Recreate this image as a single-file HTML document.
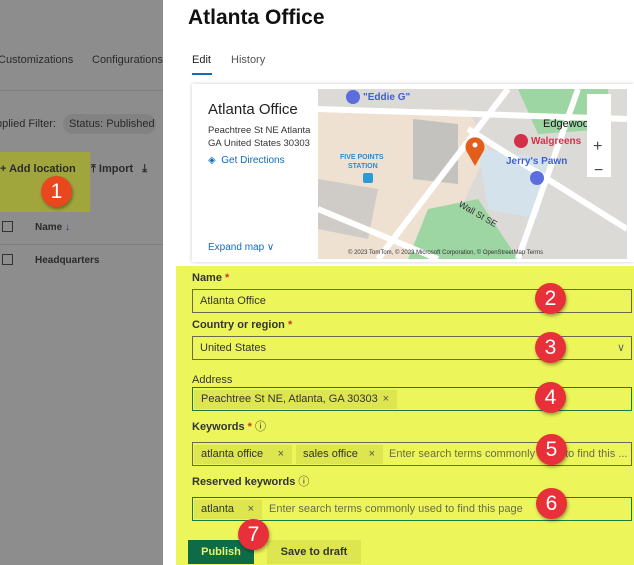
<!DOCTYPE html>
<html><head><style>
*{box-sizing:border-box;margin:0;padding:0}
body{width:634px;height:565px;overflow:hidden;position:relative;font-family:"Liberation Sans",sans-serif;background:#fff}
.abs{position:absolute;white-space:nowrap}
.ov{left:0;top:0;width:163px;height:565px;background:#8d8d8d;color:#2a2a2a;font-size:11px}
.lbl{position:absolute;left:192px;font-size:11px;font-weight:bold;color:#333}
.lbl .r{color:#c33}
.inp{position:absolute;left:192px;width:440px;height:24px;border:1px solid #6a6a50;font-size:11px;color:#333;padding-left:7px;line-height:22px;white-space:nowrap}
.tag{position:absolute;top:2px;height:19px;background:#dde64e;line-height:19px;padding-left:7px;font-size:11px;white-space:nowrap}
.tag i{position:absolute;right:8px;font-style:normal;color:#555}
.badge{position:absolute;width:31px;height:31px;border-radius:50%;background:#e8303a;color:#fff;font-size:21px;text-align:center;line-height:31px;box-shadow:1px 2px 3px rgba(0,0,0,.35)}
.ph{position:absolute;top:5px;color:#6b6b50;font-size:11px;line-height:13px}
</style></head><body>
<div class="abs ov">
 <div class="abs" style="left:-2px;top:54px">Customizations</div>
 <div class="abs" style="left:92px;top:54px">Configurations</div>
 <div class="abs" style="left:0;top:90px;width:163px;height:1px;background:#7f7f7f"></div>
 <div class="abs" style="left:-4px;top:118px">pplied Filter:</div>
 <div class="abs" style="left:63px;top:114px;width:93px;height:20px;border-radius:10px;background:#828282"></div>
 <div class="abs" style="left:69px;top:118px">Status: Published</div>
 <div class="abs" style="left:0;top:152px;width:90px;height:60px;background:#a0a63c"></div>
 <div class="abs" style="left:0;top:163px;font-weight:bold">+ Add location</div>
 <div class="abs" style="left:91px;top:163px;font-weight:bold">⤒ Import &nbsp;&nbsp;⤓</div>
 <div class="abs" style="left:2px;top:221px;width:11px;height:11px;border:1px solid #333"></div>
 <div class="abs" style="left:35px;top:222px;font-size:10px;font-weight:bold">Name <span style="color:#335">↓</span></div>
 <div class="abs" style="left:0;top:244px;width:163px;height:1px;background:#7f7f7f"></div>
 <div class="abs" style="left:2px;top:254px;width:11px;height:11px;border:1px solid #333"></div>
 <div class="abs" style="left:35px;top:255px;font-size:10px;font-weight:bold">Headquarters</div>
 <div class="badge" style="left:41px;top:176px;background:#e9471e">1</div>
</div>
<div class="abs" style="left:188px;top:6px;font-size:21px;font-weight:bold;color:#111">Atlanta Office</div>
<div class="abs" style="left:192px;top:54px;font-size:11px;color:#222">Edit</div>
<div class="abs" style="left:231px;top:54px;font-size:11px;color:#555">History</div>
<div class="abs" style="left:192px;top:73px;width:20px;height:2px;background:#0f6cbd"></div>
<div class="abs" style="left:192px;top:84px;width:442px;height:178px;box-shadow:0 0 4px rgba(0,0,0,.2);background:#fff"></div>
<div class="abs" style="left:208px;top:101px;font-size:15px;color:#222">Atlanta Office</div>
<div class="abs" style="left:208px;top:124px;font-size:9.5px;color:#333;line-height:13px">Peachtree St NE Atlanta<br>GA United States 30303</div>
<div class="abs" style="left:208px;top:155px;font-size:10px;color:#0f6cbd">◈ &nbsp;Get Directions</div>
<div class="abs" style="left:208px;top:242px;font-size:10px;color:#0f6cbd">Expand map ∨</div>
<svg class="abs" style="left:318px;top:89px" width="309" height="170" viewBox="0 0 309 170">
 <rect width="309" height="170" fill="#dcdad6"/>
 <polygon points="0,20 150,20 170,60 120,170 0,170" fill="#efe1d2"/>
 <polygon points="95,30 140,35 140,95 95,90" fill="#c4c2bf"/>
 <polygon points="0,90 60,100 50,150 0,140" fill="#cfccc8"/>
 <polygon points="200,0 290,0 290,40 220,45" fill="#9dd5a3"/>
 <polygon points="110,120 160,110 200,170 90,170" fill="#9dd5a3"/>
 <polygon points="160,60 230,70 220,130 170,120" fill="#d4e2ec"/>
 <g stroke="#fff" stroke-width="6" fill="none">
  <line x1="0" y1="20" x2="309" y2="30"/>
  <line x1="190" y1="0" x2="60" y2="170"/>
  <line x1="150" y1="40" x2="309" y2="140"/>
  <line x1="0" y1="120" x2="120" y2="170"/>
  <line x1="260" y1="0" x2="200" y2="170"/>
 </g>
 <path d="M157 77 L149 63 A9.5 9.5 0 1 1 165 63 Z" fill="#e35e1a"/>
 <circle cx="157" cy="56" r="2.5" fill="#fff"/>
 <circle cx="35" cy="8" r="7" fill="#5a6ee0"/>
 <text x="45" y="11" font-size="10" fill="#3c5ed8" font-weight="bold" font-family="Liberation Sans">"Eddie G"</text>
 <text x="22" y="70" font-size="7" fill="#2a8bd0" font-weight="bold" font-family="Liberation Sans">FIVE POINTS</text>
 <text x="30" y="79" font-size="7" fill="#2a8bd0" font-weight="bold" font-family="Liberation Sans">STATION</text>
 <rect x="45" y="84" width="10" height="10" rx="2" fill="#2a9bd8"/>
 <circle cx="203" cy="52" r="7" fill="#d5304a"/>
 <text x="213" y="55" font-size="10" fill="#d5304a" font-weight="bold" font-family="Liberation Sans">Walgreens</text>
 <text x="188" y="75" font-size="10" fill="#3c5ed8" font-weight="bold" font-family="Liberation Sans">Jerry's Pawn</text>
 <circle cx="219" cy="89" r="7" fill="#5a6ee0"/>
 <text x="140" y="117" font-size="9" fill="#333" font-family="Liberation Sans" transform="rotate(30 140 117)">Wall St SE</text>
 <text x="225" y="38" font-size="11" fill="#111" font-family="Liberation Sans">Edgewood</text>
 <rect x="269" y="5" width="24" height="83" fill="#fff"/>
 <text x="275" y="62" font-size="16" fill="#444" font-family="Liberation Sans">+</text>
 <text x="276" y="86" font-size="16" fill="#444" font-family="Liberation Sans">−</text>
 <text x="30" y="165" font-size="6" fill="#333" font-family="Liberation Sans">© 2023 TomTom, © 2023 Microsoft Corporation, © OpenStreetMap  Terms</text>
</svg>
<div class="abs" style="left:176px;top:266px;width:458px;height:299px;background:#ecf55a"></div>
<div class="lbl" style="top:272px">Name <span class="r">*</span></div>
<div class="inp" style="top:289px">Atlanta Office</div>
<div class="lbl" style="top:319px">Country or region <span class="r">*</span></div>
<div class="inp" style="top:336px">United States<span style="position:absolute;right:6px;color:#666">∨</span></div>
<div class="lbl" style="top:374px;font-weight:normal">Address</div>
<div class="inp" style="top:387px;border:1px solid #1a7a3e;padding:0"><div class="tag" style="left:1px;width:203px">Peachtree St NE, Atlanta, GA 30303<i>×</i></div></div>
<div class="lbl" style="top:418px">Keywords <span class="r">*</span> <span style="font-weight:normal">ⓘ</span></div>
<div class="inp" style="top:442px;padding:0"><div class="tag" style="left:1px;width:98px">atlanta office<i>×</i></div><div class="tag" style="left:103px;width:87px">sales office<i>×</i></div><div class="ph" style="left:196px">Enter search terms commonly used to find this ...</div></div>
<div class="lbl" style="top:473px">Reserved keywords <span style="font-weight:normal">ⓘ</span></div>
<div class="inp" style="top:497px;border:1px solid #1a7a3e;padding:0"><div class="tag" style="left:1px;width:68px">atlanta<i>×</i></div><div class="ph" style="left:76px">Enter search terms commonly used to find this page</div></div>
<div class="abs" style="left:188px;top:540px;width:66px;height:24px;background:#0e6b47;color:#e8f36a;font-size:11px;font-weight:bold;text-align:center;line-height:24px">Publish</div>
<div class="abs" style="left:267px;top:540px;width:94px;height:24px;background:#dde64e;color:#333;font-size:11px;font-weight:bold;text-align:center;line-height:24px">Save to draft</div>
<div class="badge" style="left:535px;top:283px">2</div>
<div class="badge" style="left:535px;top:332px">3</div>
<div class="badge" style="left:535px;top:382px">4</div>
<div class="badge" style="left:536px;top:434px">5</div>
<div class="badge" style="left:536px;top:488px">6</div>
<div class="badge" style="left:238px;top:519px">7</div>
</body></html>
